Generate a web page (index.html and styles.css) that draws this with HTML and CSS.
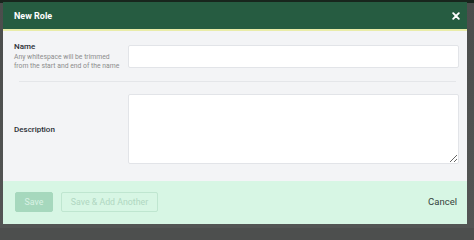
FILE: index.html
```html
<!DOCTYPE html>
<html>
<head>
<meta charset="utf-8">
<link rel="stylesheet" href="styles.css">
</head>
<body>
<div class="backdrop">
  <div class="modal">
    <div class="modal-header">
      <span class="modal-title">New Role</span>
      <button class="close" aria-label="Close">
        <svg width="8" height="8" viewBox="0 0 8 8"><path d="M1.2 1.2 L6.8 6.8 M6.8 1.2 L1.2 6.8" stroke="#ffffff" stroke-width="1.9" stroke-linecap="round"/></svg>
      </button>
    </div>
    <div class="modal-body">
      <div class="field">
        <div class="label-col">
          <div class="label">Name</div>
          <div class="hint">Any whitespace will be trimmed<br>from the start and end of the name</div>
        </div>
        <input class="input" type="text">
      </div>
      <div class="divider"></div>
      <div class="field">
        <div class="label-col">
          <div class="label">Description</div>
        </div>
        <textarea class="textarea"></textarea>
      </div>
    </div>
    <div class="modal-footer">
      <button class="btn btn-save">Save</button>
      <button class="btn btn-another">Save &amp; Add Another</button>
      <span class="spacer"></span>
      <button class="btn-cancel">Cancel</button>
    </div>
  </div>
</div>
</body>
</html>
```
FILE: styles.css
```css
* { box-sizing: border-box; }
html, body {
  margin: 0;
  padding: 0;
  width: 474px;
  height: 228px;
  overflow: hidden;
}
body {
  font-family: Roboto, "Liberation Sans", sans-serif;
  background: #4d4f4e;
}
.backdrop {
  width: 474px;
  height: 228px;
  padding: 2px 7px 4px 3px;
  background: linear-gradient(to bottom, #18261d 0, #18261d 3px, #4b4d4c 3px, #535554 100%);
}
.modal {
  width: 464px;
  height: 222px;
  display: flex;
  flex-direction: column;
  background: #f3f4f6;
}
.modal-header {
  height: 29px;
  flex: none;
  background: #265c41;
  border-bottom: 2px solid #e9eca9;
  display: flex;
  align-items: center;
  padding: 0 6px 0 11px;
}
.modal-title {
  flex: 1;
  color: #ffffff;
  font-weight: 700;
  font-size: 9px;
  padding-top: 1px;
}
.close {
  border: 0;
  background: none;
  padding: 0;
  margin: 0;
  width: 10px;
  height: 10px;
  display: flex;
  align-items: center;
  justify-content: center;
  margin-top: 1px;
}
.modal-body {
  flex: 1;
  padding: 10px 8px 0 11px;
}
.field {
  display: grid;
  grid-template-columns: 114px 1fr;
  align-items: center;
}
.label {
  font-size: 8px;
  font-weight: 500;
  color: #2a2f35;
  line-height: 11px;
}
.hint {
  font-size: 6.8px;
  color: #8c8c8c;
  line-height: 9px;
  margin-top: 1px;
}
.input {
  height: 23px;
  border: 1px solid #e2e4e8;
  border-radius: 2px;
  background: #ffffff;
  margin: 0;
  outline: none;
}
.divider {
  height: 1px;
  background: #e4e6e9;
  margin: 10px 3px 12px 5px;
}
.textarea {
  height: 70px;
  border: 1px solid #e2e4e8;
  border-radius: 2px;
  background: #ffffff;
  margin: 0;
  resize: vertical;
  outline: none;
  display: block;
}
.modal-footer {
  height: 43px;
  flex: none;
  background: #d7f6e4;
  display: flex;
  align-items: center;
  padding: 0 10px 2px 12px;
  gap: 8px;
}
.btn {
  font-family: Roboto, "Liberation Sans", sans-serif;
  font-size: 8.8px;
  height: 20px;
  border-radius: 2px;
  padding: 0 8px;
  margin: 0;
}
.btn-save {
  background: #a6d8bd;
  border: 1px solid #a6d8bd;
  color: #d9f2e4;
  width: 38px;
}
.btn-another {
  background: transparent;
  border: 1px solid #bfe6d0;
  color: #b0d6c1;
  width: 97px;
}
.spacer { flex: 1; }
.btn-cancel {
  background: none;
  border: 0;
  padding: 0;
  font-family: Roboto, "Liberation Sans", sans-serif;
  font-size: 9.5px;
  color: #34423b;
}
```
